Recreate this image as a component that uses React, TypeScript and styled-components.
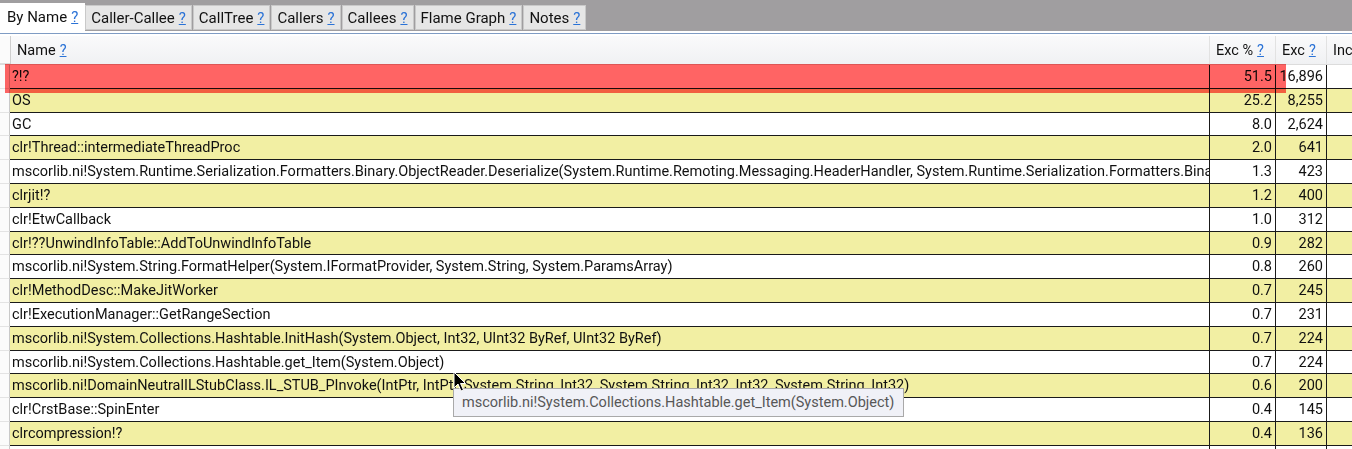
import React from "react";
import styled, { createGlobalStyle } from "styled-components";

const GlobalStyle = createGlobalStyle`
  html, body {
    margin: 0;
    padding: 0;
    background: #ffffff;
  }
  body {
    font-family: Roboto, "Noto Sans", sans-serif;
    color: #111111;
  }
`;

const COLUMNS = "10px 1199px 66px 51px 1fr";

const Page = styled.div`
  position: relative;
  width: 1352px;
  height: 449px;
  overflow: hidden;
  background: #ffffff;
`;

const TabStrip = styled.div`
  display: flex;
  align-items: flex-end;
  height: 31px;
  background: #a09ea0;
  border-bottom: 2px solid #ffffff;
`;

const Tab = styled.div<{ $active?: boolean }>`
  display: flex;
  align-items: center;
  gap: 4px;
  box-sizing: border-box;
  height: ${(p) => (p.$active ? "30px" : "25px")};
  margin-bottom: ${(p) => (p.$active ? "-2px" : "1px")};
  margin-right: ${(p) => (p.$active ? "0" : "1px")};
  padding: ${(p) => (p.$active ? "0 6px 3px 6px" : "0 5px")};
  background: ${(p) => (p.$active ? "#ffffff" : "#e6e6e6")};
  border: 1px solid ${(p) => (p.$active ? "#ffffff" : "#c9c9c9")};
  font-size: 15px;
  color: #111111;
  white-space: nowrap;
`;

const Help = styled.span`
  color: #2a72d6;
  text-decoration: underline;
`;

const Panel = styled.div`
  border-top: 1px solid #7f9cc4;
  padding-top: 2px;
`;

const HeaderRow = styled.div`
  display: grid;
  grid-template-columns: ${COLUMNS};
  height: 28px;
  border-bottom: 1px solid #dcdcdc;
  background: linear-gradient(#fafafb, #f0f1f3);
`;

const HeaderCell = styled.div<{ $first?: boolean }>`
  display: flex;
  align-items: center;
  gap: 4px;
  padding-left: 6px;
  font-size: 14.5px;
  white-space: nowrap;
  overflow: hidden;
  border-left: 1px solid ${(p) => (p.$first ? "#cfcfcf" : "#e2e2e2")};
`;

const Gutter = styled.div`
  background: #fbfbfb;
  border-bottom: 1px solid #dedede;
`;

const Row = styled.div<{ $alt?: boolean }>`
  display: grid;
  grid-template-columns: ${COLUMNS};
  height: 22.8px;
  border-bottom: 1px solid #1a1a1a;
  background: ${(p) => (p.$alt ? "#f2efa3" : "#ffffff")};
  font-size: 14.5px;
  line-height: 22.8px;
`;

const RowGutter = styled.div`
  background: #fbfbfb;
  border-right: 1px solid #c9c9c9;
  margin-bottom: -1px;
  border-bottom: 1px solid #e3e3e3;
`;

const NameCell = styled.div`
  padding: 1px 0 0 2px;
  white-space: nowrap;
  overflow: hidden;
`;

const NumCell = styled.div`
  text-align: right;
  padding: 1px 3px 0 0;
  border-left: 1px solid #1a1a1a;
  white-space: nowrap;
  overflow: hidden;
`;

const Highlight = styled.div`
  position: absolute;
  left: 5px;
  top: 64px;
  width: 1281px;
  height: 29px;
  background: #ff6464;
  mix-blend-mode: multiply;
  pointer-events: none;
`;

const Tooltip = styled.div`
  position: absolute;
  left: 453px;
  top: 388px;
  box-sizing: border-box;
  width: 451px;
  height: 29px;
  padding-left: 8px;
  display: flex;
  align-items: center;
  background: #f0f1f7;
  border: 1px solid #a9a9a9;
  color: #575757;
  font-size: 14.5px;
  white-space: nowrap;
`;

const Cursor = styled.svg`
  position: absolute;
  left: 453px;
  top: 371px;
`;

type Item = { name: string; pct: string; exc: string };

const items: Item[] = [
  { name: "?!?", pct: "51.5", exc: "16,896" },
  { name: "OS", pct: "25.2", exc: "8,255" },
  { name: "GC", pct: "8.0", exc: "2,624" },
  { name: "clr!Thread::intermediateThreadProc", pct: "2.0", exc: "641" },
  {
    name: "mscorlib.ni!System.Runtime.Serialization.Formatters.Binary.ObjectReader.Deserialize(System.Runtime.Remoting.Messaging.HeaderHandler, System.Runtime.Serialization.Formatters.Binary.__BinaryParser, Boolean, Boolean, System.Runtime.Remoting.Messaging.IMethodCallMessage)",
    pct: "1.3",
    exc: "423",
  },
  { name: "clrjit!?", pct: "1.2", exc: "400" },
  { name: "clr!EtwCallback", pct: "1.0", exc: "312" },
  { name: "clr!??UnwindInfoTable::AddToUnwindInfoTable", pct: "0.9", exc: "282" },
  {
    name: "mscorlib.ni!System.String.FormatHelper(System.IFormatProvider, System.String, System.ParamsArray)",
    pct: "0.8",
    exc: "260",
  },
  { name: "clr!MethodDesc::MakeJitWorker", pct: "0.7", exc: "245" },
  { name: "clr!ExecutionManager::GetRangeSection", pct: "0.7", exc: "231" },
  {
    name: "mscorlib.ni!System.Collections.Hashtable.InitHash(System.Object, Int32, UInt32 ByRef, UInt32 ByRef)",
    pct: "0.7",
    exc: "224",
  },
  { name: "mscorlib.ni!System.Collections.Hashtable.get_Item(System.Object)", pct: "0.7", exc: "224" },
  {
    name: "mscorlib.ni!DomainNeutralILStubClass.IL_STUB_PInvoke(IntPtr, IntPtr, System.String, Int32, System.String, Int32, Int32, System.String, Int32)",
    pct: "0.6",
    exc: "200",
  },
  { name: "clr!CrstBase::SpinEnter", pct: "0.4", exc: "145" },
  { name: "clrcompression!?", pct: "0.4", exc: "136" },
  { name: "", pct: "", exc: "" },
];

const tabs = ["By Name", "Caller-Callee", "CallTree", "Callers", "Callees", "Flame Graph", "Notes"];

export default function App() {
  return (
    <Page>
      <GlobalStyle />
      <TabStrip>
        {tabs.map((t, i) => (
          <Tab key={t} $active={i === 0}>
            {t} <Help>?</Help>
          </Tab>
        ))}
      </TabStrip>
      <Panel>
        <HeaderRow>
          <Gutter />
          <HeaderCell $first>
            Name <Help>?</Help>
          </HeaderCell>
          <HeaderCell>
            Exc % <Help>?</Help>
          </HeaderCell>
          <HeaderCell>
            Exc <Help>?</Help>
          </HeaderCell>
          <HeaderCell>Inc</HeaderCell>
        </HeaderRow>
        {items.map((it, i) => (
          <Row key={i} $alt={i % 2 === 1}>
            <RowGutter />
            <NameCell>{it.name}</NameCell>
            <NumCell>{it.pct}</NumCell>
            <NumCell>{it.exc}</NumCell>
            <NumCell />
          </Row>
        ))}
      </Panel>
      <Highlight />
      <Tooltip>mscorlib.ni!System.Collections.Hashtable.get_Item(System.Object)</Tooltip>
      <Cursor width="14" height="22" viewBox="0 0 14 22">
        <path
          d="M1 1 L1 17 L5 13 L8 20 L10.5 19 L7.5 12.5 L12.5 12.5 Z"
          fill="#000000"
          stroke="#ffffff"
          strokeWidth="1"
          strokeLinejoin="round"
        />
      </Cursor>
    </Page>
  );
}
